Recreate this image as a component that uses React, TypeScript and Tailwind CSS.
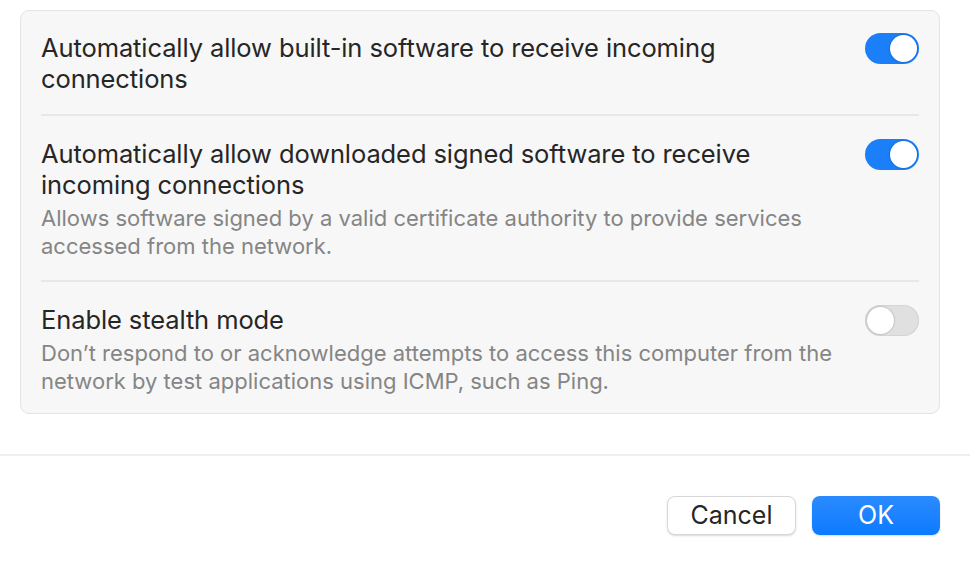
import React, { useState } from "react";

interface Setting {
  id: string;
  title: string;
  description?: string;
  enabled: boolean;
}

const initialSettings: Setting[] = [
  {
    id: "builtin",
    title: "Automatically allow built-in software to receive incoming connections",
    enabled: true,
  },
  {
    id: "signed",
    title: "Automatically allow downloaded signed software to receive incoming connections",
    description:
      "Allows software signed by a valid certificate authority to provide services accessed from the network.",
    enabled: true,
  },
  {
    id: "stealth",
    title: "Enable stealth mode",
    description:
      "Don\u2019t respond to or acknowledge attempts to access this computer from the network by test applications using ICMP, such as Ping.",
    enabled: false,
  },
];

export default function App() {
  const [settings, setSettings] = useState(initialSettings);

  const toggle = (id: string) =>
    setSettings((s) => s.map((x) => (x.id === id ? { ...x, enabled: !x.enabled } : x)));

  return (
    <div
      className="h-[566px] w-[970px] overflow-hidden bg-white pt-[10px]"
      style={{ fontFamily: "Inter, 'Liberation Sans', sans-serif" }}
    >
      {/* Settings card */}
      <div className="ml-[20px] w-[920px] rounded-[9px] border border-[#e4e4e4] bg-[#f7f7f7] px-[20px]">
        {settings.map((s, i) => (
          <div
            key={s.id}
            className={`flex items-start justify-between gap-4 ${i === 0 ? "pt-[21px]" : "pt-[22px]"} ${
              i < settings.length - 1 ? "border-b-2 border-[#e8e8e8] pb-[20px]" : "pb-[18px]"
            }`}
          >
            <div className="max-w-[815px]">
              <p className="text-[25.5px] leading-[31px] tracking-[-0.1px] text-[#262626]">{s.title}</p>
              {s.description && (
                <p className="mt-[4px] text-[22px] leading-[28px] text-[#858585]">{s.description}</p>
              )}
            </div>
            <Toggle on={s.enabled} onClick={() => toggle(s.id)} />
          </div>
        ))}
      </div>

      {/* Footer */}
      <div className="mt-[40px] h-[2px] w-full bg-[#efefef]" />
      <div className="flex justify-end gap-4 pr-[30px] pt-[40px]">
        <button className="h-[39px] w-[129px] rounded-[8px] border border-[#d8d8d8] bg-white text-[25px] text-[#262626] shadow-[0_1px_2px_rgba(0,0,0,0.15)]">
          Cancel
        </button>
        <button className="h-[39px] w-[128px] rounded-[8px] bg-gradient-to-b from-[#2a8bff] to-[#0a7aff] text-[25px] text-white shadow-[0_1px_2px_rgba(0,0,0,0.15)]">
          OK
        </button>
      </div>
    </div>
  );
}

function Toggle({ on, onClick }: { on: boolean; onClick: () => void }) {
  return (
    <button
      onClick={onClick}
      className={`mt-[1px] flex h-[31px] w-[54px] shrink-0 items-center rounded-full p-[2px] ${
        on ? "justify-end bg-[#1a7ff8]" : "justify-start bg-[#e0e0e0] shadow-[inset_0_0_0_1px_#d4d4d4]"
      }`}
    >
      <span className="h-[27px] w-[27px] rounded-full bg-white shadow-[0_0_1px_1px_rgba(0,0,0,0.12)]" />
    </button>
  );
}
